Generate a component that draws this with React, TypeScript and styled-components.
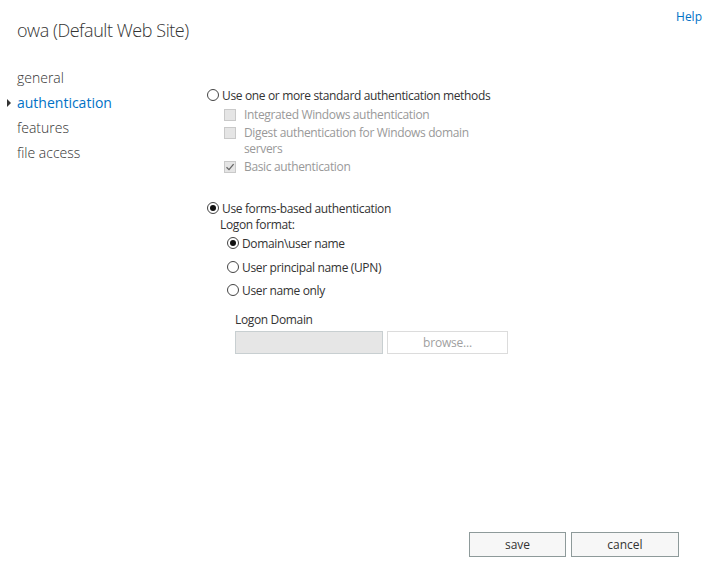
import React from 'react';
import styled, { createGlobalStyle } from 'styled-components';

const GlobalStyle = createGlobalStyle`
  html, body {
    margin: 0;
    padding: 0;
    background: #fff;
  }
  body {
    font-family: 'Open Sans', 'Segoe UI', sans-serif;
    color: #333;
  }
`;

const Page = styled.div`
  width: 709px;
  height: 563px;
  display: flex;
  flex-direction: column;
  box-sizing: border-box;
  overflow: hidden;
`;

const Header = styled.div`
  display: flex;
  justify-content: space-between;
  align-items: flex-start;
  padding: 0 7px 0 17px;
`;

const Title = styled.h1`
  margin: 17px 0 0;
  font-size: 18px;
  font-weight: 300;
  line-height: 26px;
  letter-spacing: -0.45px;
  color: #333;
`;

const HelpLink = styled.a`
  margin-top: 9px;
  font-size: 12px;
  line-height: 16px;
  color: #0072c6;
  text-decoration: none;
  cursor: pointer;
`;

const Body = styled.div`
  display: flex;
  padding: 22px 0 0 17px;
  flex: 1;
`;

const Nav = styled.ul`
  list-style: none;
  margin: 0;
  padding: 0;
  width: 190px;
  flex-shrink: 0;
`;

const NavItem = styled.li<{ $active?: boolean }>`
  position: relative;
  font-size: 14px;
  font-weight: ${({ $active }) => ($active ? 400 : 300)};
  line-height: 25px;
  color: ${({ $active }) => ($active ? '#0072c6' : '#333')};
  cursor: pointer;
  &::before {
    content: '';
    display: ${({ $active }) => ($active ? 'block' : 'none')};
    position: absolute;
    left: -10px;
    top: 9px;
    border-style: solid;
    border-width: 4px 0 4px 4px;
    border-color: transparent transparent transparent #333;
  }
`;

const Content = styled.div`
  padding-top: 23px;
  font-size: 12px;
  line-height: 16px;
  letter-spacing: -0.35px;
`;

const Option = styled.label<{ $indent?: number; $gap?: number; $disabled?: boolean }>`
  display: flex;
  align-items: flex-start;
  gap: 3px;
  margin-left: ${({ $indent }) => $indent ?? 0}px;
  margin-top: ${({ $gap }) => $gap ?? 0}px;
  color: ${({ $disabled }) => ($disabled ? '#999' : '#333')};
`;

const RadioMark = styled.span<{ $checked?: boolean }>`
  position: relative;
  flex-shrink: 0;
  width: 12px;
  height: 12px;
  margin-top: 1px;
  box-sizing: border-box;
  border: 1px solid #444;
  border-radius: 50%;
  background: #fff;
  &::after {
    content: '';
    display: ${({ $checked }) => ($checked ? 'block' : 'none')};
    position: absolute;
    left: 2px;
    top: 2px;
    width: 6px;
    height: 6px;
    border-radius: 50%;
    background: #111;
  }
`;

const CheckMark = styled.span`
  flex-shrink: 0;
  width: 12px;
  height: 12px;
  margin-top: 2px;
  margin-right: 5px;
  box-sizing: border-box;
  border: 1px solid #c9c9c9;
  background: #e5e5e5;
  display: flex;
  align-items: center;
  justify-content: center;
`;

const CheckLabel = styled.span`
  width: 240px;
`;

const Caption = styled.div<{ $indent: number; $gap?: number }>`
  margin-left: ${({ $indent }) => $indent}px;
  margin-top: ${({ $gap }) => $gap ?? 0}px;
  color: #333;
`;

const DomainRow = styled.div`
  display: flex;
  gap: 4px;
  margin: 3px 0 0 28px;
`;

const DomainInput = styled.div`
  width: 148px;
  height: 23px;
  box-sizing: border-box;
  border: 1px solid #c8cfd1;
  background: #e6e6e6;
`;

const BrowseButton = styled.button`
  width: 121px;
  height: 23px;
  box-sizing: border-box;
  border: 1px solid #dcdcdc;
  background: #fff;
  font-family: inherit;
  font-size: 12px;
  letter-spacing: -0.2px;
  color: #a0a0a0;
  padding: 0;
`;

const Footer = styled.div`
  display: flex;
  justify-content: flex-end;
  gap: 5px;
  padding: 0 30px 6px 0;
`;

const FooterButton = styled.button<{ $width: number }>`
  width: ${({ $width }) => $width}px;
  height: 25px;
  box-sizing: border-box;
  border: 1px solid #8e9a9a;
  background: #f7f7f7;
  font-family: inherit;
  font-size: 12px;
  color: #333;
  padding: 0;
`;

const Check = () => (
  <svg width="10" height="10" viewBox="0 0 10 10">
    <path d="M1.5 5.2 L4 7.6 L8.6 2.2" fill="none" stroke="#666" strokeWidth="1.3" />
  </svg>
);

export default function App() {
  return (
    <Page>
      <GlobalStyle />
      <Header>
        <Title>owa (Default Web Site)</Title>
        <HelpLink>Help</HelpLink>
      </Header>
      <Body>
        <Nav>
          <NavItem>general</NavItem>
          <NavItem $active>authentication</NavItem>
          <NavItem>features</NavItem>
          <NavItem>file access</NavItem>
        </Nav>
        <Content>
          <Option>
            <RadioMark />
            <span>Use one or more standard authentication methods</span>
          </Option>
          <Option $indent={17} $gap={3} $disabled>
            <CheckMark />
            <CheckLabel>Integrated Windows authentication</CheckLabel>
          </Option>
          <Option $indent={17} $gap={2} $disabled>
            <CheckMark />
            <CheckLabel>Digest authentication for Windows domain servers</CheckLabel>
          </Option>
          <Option $indent={17} $gap={2} $disabled>
            <CheckMark>
              <Check />
            </CheckMark>
            <CheckLabel>Basic authentication</CheckLabel>
          </Option>
          <Option $gap={26}>
            <RadioMark $checked />
            <span>Use forms-based authentication</span>
          </Option>
          <Caption $indent={13}>Logon format:</Caption>
          <Option $indent={20} $gap={3}>
            <RadioMark $checked />
            <span>Domain\user name</span>
          </Option>
          <Option $indent={20} $gap={8}>
            <RadioMark />
            <span>User principal name (UPN)</span>
          </Option>
          <Option $indent={20} $gap={7}>
            <RadioMark />
            <span>User name only</span>
          </Option>
          <Caption $indent={28} $gap={13}>Logon Domain</Caption>
          <DomainRow>
            <DomainInput />
            <BrowseButton>browse...</BrowseButton>
          </DomainRow>
        </Content>
      </Body>
      <Footer>
        <FooterButton $width={97}>save</FooterButton>
        <FooterButton $width={108}>cancel</FooterButton>
      </Footer>
    </Page>
  );
}
